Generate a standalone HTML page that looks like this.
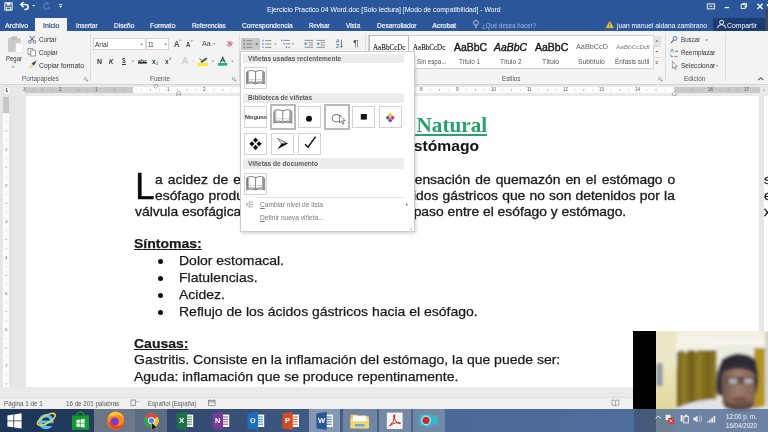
<!DOCTYPE html>
<html lang="es">
<head>
<meta charset="utf-8">
<title>Ejercicio Practico 04 Word.doc - Word</title>
<style>
*{box-sizing:border-box;margin:0;padding:0}
html,body{width:768px;height:432px;overflow:hidden;background:#fff}
body{position:relative;font-family:"Liberation Sans",sans-serif;font-size:7px;color:#333}
.a{position:absolute;white-space:nowrap}
.x{transform-origin:0 50%}
#hdr{left:0;top:0;width:768px;height:31px;background:#2b579a}
#rib{left:0;top:31px;width:768px;height:53.5px;background:#f3f3f3;border-bottom:.7px solid #d4d4d4}
.p{font-size:12.4px;line-height:16px;color:#1a1a1a;transform:scaleX(1.118);transform-origin:0 0;-webkit-text-stroke:.3px #1a1a1a}
.pr{transform-origin:100% 0}
.q{font-size:13.4px;line-height:16px;color:#1a1a1a;transform:scaleX(1.045);transform-origin:0 0;-webkit-text-stroke:.25px #1a1a1a}
.b{left:158px;width:5.4px;height:5.4px;border-radius:50%;background:#111}
#all{position:absolute;left:0;top:0;width:768px;height:432px;filter:blur(.4px)}
</style>
</head>
<body>
<div id="all">
<div id="hdr" class="a"></div>
<div class="a" style="left:35.2px;top:18px;width:31.8px;height:14px;background:#f3f3f3"></div>
<div class="a" style="left:713px;top:17.5px;width:55px;height:13.5px;background:#1b3c70"></div>
<div class="a" style="left:765px;top:9px;width:3px;height:22px;background:#3c4962"></div>
<span class="a x" style="left:266.5px;top:6.26px;font-size:6.9px;line-height:8.97px;color:#fff;transform:scaleX(0.986);">Ejercicio Practico 04 Word.doc [Solo lectura] [Modo de compatibilidad] - Word</span>
<span class="a x" style="left:5px;top:22.26px;font-size:6.9px;line-height:8.97px;color:#fff;transform:scaleX(1.001);-webkit-text-stroke:.15px;">Archivo</span>
<span class="a x" style="left:42.5px;top:22.26px;font-size:6.9px;line-height:8.97px;color:#274980;transform:scaleX(1.025);-webkit-text-stroke:.15px;">Inicio</span>
<span class="a x" style="left:75.5px;top:22.26px;font-size:6.9px;line-height:8.97px;color:#fff;transform:scaleX(0.920);-webkit-text-stroke:.15px;">Insertar</span>
<span class="a x" style="left:113.7px;top:22.26px;font-size:6.9px;line-height:8.97px;color:#fff;transform:scaleX(0.946);-webkit-text-stroke:.15px;">Diseño</span>
<span class="a x" style="left:150px;top:22.26px;font-size:6.9px;line-height:8.97px;color:#fff;transform:scaleX(0.994);-webkit-text-stroke:.15px;">Formato</span>
<span class="a x" style="left:192px;top:22.26px;font-size:6.9px;line-height:8.97px;color:#fff;transform:scaleX(0.918);-webkit-text-stroke:.15px;">Referencias</span>
<span class="a x" style="left:242px;top:22.26px;font-size:6.9px;line-height:8.97px;color:#fff;transform:scaleX(0.967);-webkit-text-stroke:.15px;">Correspondencia</span>
<span class="a x" style="left:309px;top:22.26px;font-size:6.9px;line-height:8.97px;color:#fff;transform:scaleX(0.878);-webkit-text-stroke:.15px;">Revisar</span>
<span class="a x" style="left:345.75px;top:22.26px;font-size:6.9px;line-height:8.97px;color:#fff;transform:scaleX(0.937);-webkit-text-stroke:.15px;">Vista</span>
<span class="a x" style="left:376.5px;top:22.26px;font-size:6.9px;line-height:8.97px;color:#fff;transform:scaleX(0.955);-webkit-text-stroke:.15px;">Desarrollador</span>
<span class="a x" style="left:432.25px;top:22.26px;font-size:6.9px;line-height:8.97px;color:#fff;transform:scaleX(1.000);-webkit-text-stroke:.15px;">Acrobat</span>
<span class="a x" style="left:482px;top:22.26px;font-size:6.9px;line-height:8.97px;color:#a3b8dc;transform:scaleX(0.887);">¿Qué desea hacer?</span>
<span class="a x" style="left:617px;top:22.26px;font-size:6.9px;line-height:8.97px;color:#fff;transform:scaleX(0.971);">juan manuel aldana zambrano</span>
<span class="a x" style="left:727.25px;top:22.26px;font-size:6.9px;line-height:8.97px;color:#fff;transform:scaleX(0.992);">Compartir</span>
<svg class="a" style="left:0;top:0" width="768" height="31" viewBox="0 0 768 31" fill="none" stroke="#fff" stroke-width="1">
<rect x="4.9" y="2.8" width="7.2" height="7.2"/><rect x="6.6" y="2.8" width="3.8" height="2.6" fill="#fff" stroke="none"/><rect x="6.4" y="7.2" width="4.2" height="2.8" stroke-width=".8"/>
<path d="M21.6 4.6 H25.2 a3 2.5 0 0 1 0 5 H24.4" stroke-width="1.5"/><path d="M23.6 2 L20.8 4.6 L23.6 7.2" stroke-width="1.5"/>
<path d="M32.2 5 h3 l-1.5 1.6z" fill="#fff" stroke="none"/>
<path d="M49.6 6.2 a3 3 0 1 1 -1.6 -2.7" stroke="#5f82b8" stroke-width="1.2"/><path d="M47 2 l2 1.6 l-2 1.8" stroke="#5f82b8" stroke-width="1"/>
<path d="M58.9 4.6 h3.4" stroke-width=".9"/><path d="M58.9 5.9 h3.4 l-1.7 1.8z" fill="#fff" stroke="none"/>
<rect x="707.3" y="3.9" width="7.2" height="5" stroke-width=".9"/><path d="M709.4 6.3 h3" stroke-width=".9"/>
<path d="M724.7 7.6 h4.4" stroke-width="1.2"/>
<rect x="741.2" y="4.6" width="4" height="3.8" stroke-width=".9"/><path d="M742.6 4.4 v-1 h4 v3.8 h-1.2" stroke-width=".9"/>
<path d="M757.4 3.8 l5.2 5.2 M762.6 3.8 l-5.2 5.2" stroke-width="1.3"/>
<path d="M766.5 5 l1.5 -1.2 v3z" fill="#fff" stroke="none"/>
<path d="M609.8 21.2 l3.8 6.6 h-7.6z" fill="#f3c744" stroke="#e0b030" stroke-width=".5"/><path d="M609.8 23.4 v2.4 M609.8 26.4 v.7" stroke="#333" stroke-width=".7"/>
<circle cx="475.9" cy="22.8" r="2.4" stroke="#c8d6ee" stroke-width=".8"/><path d="M474.8 26 h2.2 M475 27.4 h1.8" stroke="#c8d6ee" stroke-width=".8"/>
<circle cx="721.6" cy="22.3" r="2" stroke-width="1"/><path d="M717.6 28.2 a4 3.6 0 0 1 8 0" stroke-width="1"/>
</svg>
<div id="rib" class="a"></div>
<div class="a" style="left:90.2px;top:34px;width:1px;height:47px;background:#dedede"></div>
<div class="a" style="left:238.6px;top:34px;width:1px;height:47px;background:#dedede"></div>
<div class="a" style="left:365.4px;top:34px;width:1px;height:47px;background:#dedede"></div>
<div class="a" style="left:665.4px;top:34px;width:1px;height:47px;background:#dedede"></div>
<div class="a" style="left:725px;top:34px;width:1px;height:47px;background:#dedede"></div>
<span class="a x" style="left:6px;top:55.26px;font-size:6.6px;line-height:8.58px;color:#333;transform:scaleX(0.909);">Pegar</span>
<span class="a x" style="left:38.75px;top:36.25px;font-size:6.8px;line-height:8.84px;color:#333;transform:scaleX(0.926);">Cortar</span>
<span class="a x" style="left:38.75px;top:49.25px;font-size:6.8px;line-height:8.84px;color:#333;transform:scaleX(0.936);">Copiar</span>
<span class="a x" style="left:38.75px;top:62.26px;font-size:6.8px;line-height:8.84px;color:#333;transform:scaleX(1.001);">Copiar formato</span>
<span class="a x" style="left:21.9px;top:75.25px;font-size:6.5px;line-height:8.45px;color:#575757;transform:scaleX(0.962);">Portapapeles</span>
<span class="a x" style="left:149.9px;top:75.25px;font-size:6.5px;line-height:8.45px;color:#575757;transform:scaleX(0.988);">Fuente</span>
<span class="a x" style="left:501.5px;top:75.25px;font-size:6.5px;line-height:8.45px;color:#575757;transform:scaleX(0.966);">Estilos</span>
<span class="a x" style="left:684px;top:75.25px;font-size:6.5px;line-height:8.45px;color:#575757;transform:scaleX(1.008);">Edición</span>
<div class="a" style="left:93.4px;top:38.3px;width:52.4px;height:12.2px;background:#fff;border:.6px solid #d6d6d6"></div>
<div class="a" style="left:145.8px;top:38.3px;width:23.7px;height:12.2px;background:#fff;border:.6px solid #d6d6d6"></div>
<span class="a x" style="left:95px;top:41.26px;font-size:6.8px;line-height:8.84px;color:#333;transform:scaleX(0.955);">Arial</span>
<span class="a x" style="left:148px;top:41.26px;font-size:6.8px;line-height:8.84px;color:#333;transform:scaleX(0.793);">11</span>
<span class="a x" style="left:96.5px;top:57.25px;font-size:7.4px;line-height:9.62px;color:#333;font-weight:bold;transform:scaleX(0.936);">N</span>
<span class="a x" style="left:109px;top:57.25px;font-size:7.4px;line-height:9.62px;color:#333;font-weight:bold;font-style:italic;transform:scaleX(0.823);">K</span>
<span class="a x" style="left:121.75px;top:56.26px;font-size:7.2px;line-height:9.36px;color:#333;font-weight:bold;transform:scaleX(0.782);text-decoration:underline;">S</span>
<span class="a x" style="left:138.4px;top:58.25px;font-size:6.6px;line-height:8.58px;color:#333;font-weight:bold;transform:scaleX(0.791);text-decoration:line-through;">abc</span>
<span class="a x" style="left:152px;top:57.26px;font-size:7.4px;line-height:9.62px;color:#333;font-weight:bold;transform:scaleX(0.873);">x</span>
<span class="a x" style="left:156px;top:62.26px;font-size:3.8px;line-height:4.94px;color:#2b79c2;font-weight:bold;transform:scaleX(0.941);">2</span>
<span class="a x" style="left:164.5px;top:57.26px;font-size:7.4px;line-height:9.62px;color:#333;font-weight:bold;transform:scaleX(0.873);">x</span>
<span class="a x" style="left:168.6px;top:57.26px;font-size:3.8px;line-height:4.94px;color:#2b79c2;font-weight:bold;transform:scaleX(0.941);">2</span>
<span class="a x" style="left:173.8px;top:39.26px;font-size:8.6px;line-height:11.18px;color:#444;font-weight:bold;transform:scaleX(0.868);">A</span>
<span class="a x" style="left:186.2px;top:40.26px;font-size:7.2px;line-height:9.36px;color:#444;font-weight:bold;transform:scaleX(0.846);">A</span>
<span class="a x" style="left:201.75px;top:39.26px;font-size:7.6px;line-height:9.88px;color:#444;transform:scaleX(0.941);">Aa</span>
<div class="a" style="left:368.2px;top:35px;width:292.5px;height:33.5px;background:#fff;border:.6px solid #d4d4d4"></div>
<div class="a" style="left:368.6px;top:35.4px;width:40px;height:32.6px;border:1px solid #b8b8b8"></div>
<span class="a x" style="left:372.5px;top:43.26px;font-size:7.8px;line-height:10.14px;color:#222;font-family:'Liberation Serif',serif;transform:scaleX(0.904);-webkit-text-stroke:.15px;">AaBbCcDc</span>
<span class="a x" style="left:412.75px;top:43.26px;font-size:7.8px;line-height:10.14px;color:#222;font-family:'Liberation Serif',serif;transform:scaleX(0.897);-webkit-text-stroke:.15px;">AaBbCcDc</span>
<span class="a x" style="left:453.5px;top:41.25px;font-size:10px;line-height:13px;color:#1a1a1a;transform:scaleX(1.041);-webkit-text-stroke:.4px;">AaBbC</span>
<span class="a x" style="left:494px;top:41.25px;font-size:10px;line-height:13px;color:#1a1a1a;font-style:italic;transform:scaleX(1.041);-webkit-text-stroke:.4px;">AaBbC</span>
<span class="a x" style="left:534.5px;top:41.26px;font-size:10.2px;line-height:13.26px;color:#1a1a1a;transform:scaleX(1.030);-webkit-text-stroke:.4px;">AaBbC</span>
<span class="a x" style="left:576px;top:42.26px;font-size:7.3px;line-height:9.49px;color:#666;transform:scaleX(0.999);">AaBbCcD</span>
<span class="a x" style="left:615.5px;top:43.25px;font-size:6.2px;line-height:8.06px;color:#777;font-style:italic;transform:scaleX(1.036);">AaBbCcDdI</span>
<span class="a x" style="left:416.5px;top:58.26px;font-size:6.5px;line-height:8.45px;color:#555;transform:scaleX(0.960);">Sin espa...</span>
<span class="a x" style="left:459px;top:58.26px;font-size:6.5px;line-height:8.45px;color:#555;transform:scaleX(0.968);">Título 1</span>
<span class="a x" style="left:499.5px;top:58.26px;font-size:6.5px;line-height:8.45px;color:#555;transform:scaleX(0.991);">Título 2</span>
<span class="a x" style="left:542px;top:58.26px;font-size:6.5px;line-height:8.45px;color:#555;transform:scaleX(1.045);">Título</span>
<span class="a x" style="left:578px;top:58.26px;font-size:6.5px;line-height:8.45px;color:#555;transform:scaleX(1.042);">Subtítulo</span>
<span class="a x" style="left:614.75px;top:58.26px;font-size:6.5px;line-height:8.45px;color:#555;transform:scaleX(0.987);">Énfasis sutil</span>
<div class="a" style="left:653px;top:35px;width:7.6px;height:33.5px;background:#f6f6f6;border-left:.6px solid #d4d4d4"></div>
<div class="a" style="left:653.4px;top:35.6px;width:7.2px;height:10.4px;background:#e2e2e2"></div><div class="a" style="left:653px;top:46px;width:7.6px;height:.6px;background:#d4d4d4"></div><div class="a" style="left:653px;top:57px;width:7.6px;height:.6px;background:#d4d4d4"></div>
<span class="a x" style="left:680.5px;top:36.25px;font-size:6.8px;line-height:8.84px;color:#333;transform:scaleX(0.910);">Buscar</span>
<span class="a x" style="left:680.5px;top:49.25px;font-size:6.8px;line-height:8.84px;color:#333;transform:scaleX(0.934);">Reemplazar</span>
<span class="a x" style="left:680.5px;top:62.25px;font-size:6.8px;line-height:8.84px;color:#333;transform:scaleX(0.964);">Seleccionar</span>
<div class="a" style="left:240.7px;top:37.9px;width:19.4px;height:12px;background:#c8c8c8"></div>
<svg class="a" style="left:0;top:31px" width="768" height="54" viewBox="0 31 768 54" fill="none">
<!-- paste -->
<rect x="8" y="38" width="12.5" height="14" rx="1" fill="#c9c9c9"/><rect x="11.4" y="36.2" width="5.6" height="3.2" rx="1" fill="#bdbdbd"/>
<path d="M15.8 43 h5 l2.4 2.4 v7.4 h-7.4z" fill="#fdfdfd" stroke="#d8d8d8" stroke-width=".5"/>
<path d="M11.6 66.6 h3 l-1.5 1.5z" fill="#777"/>
<!-- cut -->
<path d="M29.6 35.8 l4.2 5.2 M34.6 35.8 l-4.2 5.2" stroke="#555" stroke-width="1"/><circle cx="29.8" cy="41.8" r="1.4" stroke="#4a7fc0" stroke-width=".9"/><circle cx="34.4" cy="41.8" r="1.4" stroke="#4a7fc0" stroke-width=".9"/>
<!-- copy -->
<rect x="28" y="48.4" width="4.6" height="5.8" fill="#fafafa" stroke="#777" stroke-width=".7"/><rect x="30.8" y="50.2" width="4.8" height="5.8" fill="#fafafa" stroke="#777" stroke-width=".7"/>
<!-- painter -->
<path d="M28.4 67.6 l3.4 -3.6 l2 1.6 l-2.2 2.6z" fill="#f0d9a8"/><path d="M31.6 63.8 l2.6 -2.4 l1.8 1.4 l-2.2 2.8z" fill="#444"/><path d="M35 61.6 l1.2 -1" stroke="#444" stroke-width="1"/>
<!-- launchers -->
<g stroke="#777" stroke-width=".6"><path d="M84.4 77.8 h2.4 M84.4 77.8 v2.4 M85.6 79 l2 2 M87.6 79.4 v1.6 h-1.6"/><path d="M232.6 77.8 h2.4 M232.6 77.8 v2.4 M233.8 79 l2 2 M235.8 79.4 v1.6 h-1.6"/><path d="M658.8 77.8 h2.4 M658.8 77.8 v2.4 M660 79 l2 2 M662 79.4 v1.6 h-1.6"/></g>
<!-- dropdown arrows -->
<g fill="#666"><path d="M140.2 43.8 h2.8 l-1.4 1.5z"/><path d="M164.4 43.8 h2.8 l-1.4 1.5z"/><path d="M131.6 60.8 h2.4 l-1.2 1.3z"/><path d="M212.8 43.4 h2.4 l-1.2 1.3z"/><path d="M211.6 60.8 h2.4 l-1.2 1.3z"/><path d="M231.2 60.8 h2.4 l-1.2 1.3z"/><path d="M255.4 43.4 h2.8 l-1.4 1.5z" fill="#444"/><path d="M274.2 43.4 h2.4 l-1.2 1.3z"/><path d="M291.8 43.4 h2.4 l-1.2 1.3z"/><path d="M705.4 39.6 h2.4 l-1.2 1.3z"/><path d="M715.8 65.4 h2.4 l-1.2 1.3z"/></g>
<path d="M191.8 60.8 h2.4 l-1.2 1.3z" fill="#b5c4dc"/>
<!-- grow/shrink marks -->
<path d="M179 40.6 l1.3 -1.2 l1.3 1.2z" fill="#555"/><path d="M190.6 40.4 l1.2 1.2 l1.2 -1.2z" fill="#555"/>
<!-- clear formatting -->
<path d="M226.4 45.8 l3.4 -5.4 l3.6 2 l-3.6 5z" fill="#eaa4b8"/><path d="M227.6 41.4 l4.6 4.2" stroke="#8d4f9a" stroke-width="1"/>
<!-- text effects A -->
<path d="M182 64.6 l3 -7.4 l3 7.4 M183.2 62 h3.6" stroke="#c9c9c9" stroke-width="1.1"/>
<!-- highlight -->
<rect x="197.4" y="63" width="10.6" height="3.2" fill="#f5f02a"/><path d="M200.2 61.8 l5.8 -4.4 l1.6 1.4 l-5.6 4.2z" fill="#555"/><path d="M199.4 58.4 l3 2.4" stroke="#7c5aa8" stroke-width="1"/>
<!-- font colour -->
<path d="M220.3 62.4 l2.5 -5 l2.5 5 M221.2 60.7 h3.2" stroke="#4a5a52" stroke-width="1.2"/><rect x="218" y="63" width="9.2" height="2.7" fill="#1fb574"/>
<!-- bullets icon -->
<g fill="#8a8a8a"><rect x="243.2" y="39.8" width="1.6" height="1.6"/><rect x="243.2" y="43.2" width="1.6" height="1.6"/><rect x="243.2" y="46.6" width="1.6" height="1.6"/></g><path d="M246.2 40.6 h6 M246.2 44 h6 M246.2 47.4 h6" stroke="#777" stroke-width=".8"/>
<!-- numbering icon -->
<g fill="#3f74b9"><rect x="262.4" y="39.6" width="1" height="1.8"/><rect x="262.4" y="43" width="1" height="1.8"/><rect x="262.4" y="46.4" width="1" height="1.8"/></g><path d="M265 40.6 h6.4 M265 44 h6.4 M265 47.4 h6.4" stroke="#777" stroke-width=".8"/>
<!-- multilevel -->
<g fill="#3f74b9"><rect x="281.2" y="39.6" width="1" height="1.6"/><rect x="283.6" y="43" width="1" height="1.6"/><rect x="286" y="46.4" width="1" height="1.6"/></g><path d="M283.4 40.4 h6.6 M285.8 43.8 h4.4 M288.2 47.2 h2.2" stroke="#777" stroke-width=".8"/>
<!-- indents -->
<path d="M304.6 40.4 h8.6 M308.8 42.7 h4.4 M308.8 45 h4.4 M304.6 47.3 h8.6" stroke="#777" stroke-width=".8"/><path d="M307.6 43.8 h-2.8 m1.2 -1.3 l-1.4 1.3 l1.4 1.3" stroke="#3f74b9" stroke-width=".8"/>
<path d="M316.4 40.4 h8.6 M320.6 42.7 h4.4 M320.6 45 h4.4 M316.4 47.3 h8.6" stroke="#777" stroke-width=".8"/><path d="M316.4 43.8 h2.8 m-1.2 -1.3 l1.4 1.3 l-1.4 1.3" stroke="#3f74b9" stroke-width=".8"/>
<!-- sort arrow -->
<path d="M341.4 39.8 v7.4 m-1.4 -1.4 l1.4 1.5 l1.4 -1.5" stroke="#555" stroke-width=".8"/>
<!-- gallery arrows -->
<g fill="#666"><path d="M655.4 41.6 h2.8 l-1.4 -1.5z"/><path d="M655.4 51 h2.8 l-1.4 1.5z"/><path d="M655.4 62.8 h2.8 l-1.4 1.4z"/></g><path d="M655.4 61.4 h2.8" stroke="#666" stroke-width=".6"/>
<!-- search -->
<circle cx="675" cy="38.4" r="2" stroke="#3f74b9" stroke-width=".9"/><path d="M673.6 40 l-2.6 2.8" stroke="#555" stroke-width="1.1"/>
<!-- replace -->
<path d="M670.4 52.6 l1.6 -3.6 l1.6 3.6 M675 51.2 h2.8 m-1 -1 l1 1 l-1 1" stroke="#3f74b9" stroke-width=".7"/><path d="M674.2 56.6 h3.4 M671 54.6 v2 h2" stroke="#666" stroke-width=".7"/>
<!-- select cursor -->
<path d="M672.4 61.4 v7 l1.7 -1.6 l1.2 2.6 l.9 -.4 l-1.2 -2.5 h2.2z" fill="#fff" stroke="#666" stroke-width=".6"/>
<!-- collapse -->
<path d="M758.2 80.2 l2.6 -2.5 l2.6 2.5" stroke="#555" stroke-width="1.1"/>
</svg>
<span class="a x" style="left:335.6px;top:39.25px;font-size:4.6px;line-height:5.98px;color:#3f74b9;font-weight:bold;transform:scaleX(1.022);">A</span>
<span class="a x" style="left:335.6px;top:44.26px;font-size:4.6px;line-height:5.98px;color:#3f74b9;font-weight:bold;transform:scaleX(1.209);">Z</span>
<span class="a x" style="left:353.2px;top:38.27px;font-size:8.4px;line-height:10.92px;color:#555;transform:scaleX(1.267);">¶</span>
<div class="a" style="left:0;top:84.5px;width:768px;height:11.5px;background:#e9e9e9"></div>
<div class="a" style="left:2.5px;top:86px;width:8.5px;height:8.5px;background:#f6f6f6;border:.6px solid #dcdcdc"></div>
<div class="a" style="left:5.6px;top:88.4px;width:2.8px;height:3.6px;border-left:1px solid #666;border-bottom:1px solid #666"></div>
<div class="a" style="left:25px;top:87px;width:735px;height:5.8px;background:#c9c9c9"></div>
<div class="a" style="left:132.5px;top:87px;width:541.8px;height:5.8px;background:#fdfdfd"></div>
<span class="a x" style="left:22.9px;top:87.25px;font-size:4.6px;line-height:5.98px;color:#555;transform:scaleX(1.015);">3</span>
<span class="a x" style="left:59px;top:87.25px;font-size:4.6px;line-height:5.98px;color:#555;transform:scaleX(1.015);">2</span>
<span class="a x" style="left:95.1px;top:87.25px;font-size:4.6px;line-height:5.98px;color:#555;transform:scaleX(1.015);">1</span>
<span class="a x" style="left:167.3px;top:87.25px;font-size:4.6px;line-height:5.98px;color:#555;transform:scaleX(1.015);">1</span>
<span class="a x" style="left:203.4px;top:87.25px;font-size:4.6px;line-height:5.98px;color:#555;transform:scaleX(1.015);">2</span>
<span class="a x" style="left:239.5px;top:87.25px;font-size:4.6px;line-height:5.98px;color:#555;transform:scaleX(1.015);">3</span>
<span class="a x" style="left:275.6px;top:87.25px;font-size:4.6px;line-height:5.98px;color:#555;transform:scaleX(1.015);">4</span>
<span class="a x" style="left:311.7px;top:87.25px;font-size:4.6px;line-height:5.98px;color:#555;transform:scaleX(1.015);">5</span>
<span class="a x" style="left:347.8px;top:87.25px;font-size:4.6px;line-height:5.98px;color:#555;transform:scaleX(1.015);">6</span>
<span class="a x" style="left:383.9px;top:87.25px;font-size:4.6px;line-height:5.98px;color:#555;transform:scaleX(1.015);">7</span>
<span class="a x" style="left:420px;top:87.25px;font-size:4.6px;line-height:5.98px;color:#555;transform:scaleX(1.015);">8</span>
<span class="a x" style="left:456.1px;top:87.25px;font-size:4.6px;line-height:5.98px;color:#555;transform:scaleX(1.015);">9</span>
<span class="a x" style="left:491px;top:87.25px;font-size:4.6px;line-height:5.98px;color:#555;transform:scaleX(0.976);">10</span>
<span class="a x" style="left:527.1px;top:87.25px;font-size:4.6px;line-height:5.98px;color:#555;transform:scaleX(1.046);">11</span>
<span class="a x" style="left:563.2px;top:87.25px;font-size:4.6px;line-height:5.98px;color:#555;transform:scaleX(0.976);">12</span>
<span class="a x" style="left:599.3px;top:87.25px;font-size:4.6px;line-height:5.98px;color:#555;transform:scaleX(0.976);">13</span>
<span class="a x" style="left:635.4px;top:87.25px;font-size:4.6px;line-height:5.98px;color:#555;transform:scaleX(0.976);">14</span>
<span class="a x" style="left:707.6px;top:87.25px;font-size:4.6px;line-height:5.98px;color:#555;transform:scaleX(0.976);">16</span>
<span class="a x" style="left:743.7px;top:87.25px;font-size:4.6px;line-height:5.98px;color:#555;transform:scaleX(0.976);">17</span>
<svg class="a" style="left:0;top:84px" width="768" height="14" viewBox="0 84 768 14" stroke="#8a8a8a" stroke-width=".6" fill="none"><path d="M33.2 89.5 v.9"/><path d="M42.2 88.8 v2.2"/><path d="M51.3 89.5 v.9"/><path d="M69.3 89.5 v.9"/><path d="M78.3 88.8 v2.2"/><path d="M87.4 89.5 v.9"/><path d="M105.4 89.5 v.9"/><path d="M114.5 88.8 v2.2"/><path d="M123.5 89.5 v.9"/><path d="M141.5 89.5 v.9"/><path d="M150.6 88.8 v2.2"/><path d="M159.6 89.5 v.9"/><path d="M177.6 89.5 v.9"/><path d="M186.7 88.8 v2.2"/><path d="M195.7 89.5 v.9"/><path d="M213.7 89.5 v.9"/><path d="M222.8 88.8 v2.2"/><path d="M231.8 89.5 v.9"/><path d="M249.8 89.5 v.9"/><path d="M258.9 88.8 v2.2"/><path d="M267.9 89.5 v.9"/><path d="M285.9 89.5 v.9"/><path d="M295.0 88.8 v2.2"/><path d="M304.0 89.5 v.9"/><path d="M322.0 89.5 v.9"/><path d="M331.1 88.8 v2.2"/><path d="M340.1 89.5 v.9"/><path d="M358.1 89.5 v.9"/><path d="M367.1 88.8 v2.2"/><path d="M376.2 89.5 v.9"/><path d="M394.2 89.5 v.9"/><path d="M403.2 88.8 v2.2"/><path d="M412.3 89.5 v.9"/><path d="M430.3 89.5 v.9"/><path d="M439.4 88.8 v2.2"/><path d="M448.4 89.5 v.9"/><path d="M466.4 89.5 v.9"/><path d="M475.4 88.8 v2.2"/><path d="M484.5 89.5 v.9"/><path d="M502.5 89.5 v.9"/><path d="M511.6 88.8 v2.2"/><path d="M520.6 89.5 v.9"/><path d="M538.6 89.5 v.9"/><path d="M547.7 88.8 v2.2"/><path d="M556.7 89.5 v.9"/><path d="M574.7 89.5 v.9"/><path d="M583.8 88.8 v2.2"/><path d="M592.8 89.5 v.9"/><path d="M610.8 89.5 v.9"/><path d="M619.9 88.8 v2.2"/><path d="M628.9 89.5 v.9"/><path d="M646.9 89.5 v.9"/><path d="M656.0 88.8 v2.2"/><path d="M665.0 89.5 v.9"/><path d="M683.0 89.5 v.9"/><path d="M692.1 88.8 v2.2"/><path d="M701.1 89.5 v.9"/><path d="M719.1 89.5 v.9"/><path d="M728.1 88.8 v2.2"/><path d="M737.2 89.5 v.9"/><path d="M755.2 89.5 v.9"/><path d="M764.2 88.8 v2.2"/><path d="M773.3 89.5 v.9"/><path d="M154 85 h3.6 v1.6 l-1.8 1.8 l-1.8 -1.8z" fill="#f4f4f4" stroke="#777"/><path d="M176.9 96.4 h3.6 v-3.6 l-1.8 -1.8 l-1.8 1.8z M176.9 94.4 h3.6" fill="#f4f4f4" stroke="#777"/><path d="M672.4 95.2 h3.8 v-1.6 l-1.9 -1.8 l-1.9 1.8z" fill="#f4f4f4" stroke="#777"/></svg>
<div class="a" style="left:0;top:96px;width:768px;height:292px;background:#e6e6e6"></div>
<div class="a" style="left:25.5px;top:96.4px;width:733.8px;height:292px;background:#fff"></div>
<div class="a" style="left:763.5px;top:96.4px;width:5px;height:292px;background:#fff"></div>
<div class="a" style="left:3px;top:97px;width:6.2px;height:291px;background:#fbfbfb"></div>
<div class="a" style="left:3px;top:97px;width:6.2px;height:15.6px;background:#c6c6c6"></div>
<span class="a x" style="left:4.9px;top:147.26px;font-size:4.4px;line-height:5.72px;color:#666;transform:scaleX(1.060);">1</span>
<span class="a x" style="left:4.9px;top:183.25px;font-size:4.4px;line-height:5.72px;color:#666;transform:scaleX(1.060);">2</span>
<span class="a x" style="left:4.9px;top:219.25px;font-size:4.4px;line-height:5.72px;color:#666;transform:scaleX(1.060);">3</span>
<span class="a x" style="left:4.9px;top:255.26px;font-size:4.4px;line-height:5.72px;color:#666;transform:scaleX(1.060);">4</span>
<span class="a x" style="left:4.9px;top:291.26px;font-size:4.4px;line-height:5.72px;color:#666;transform:scaleX(1.060);">5</span>
<span class="a x" style="left:4.9px;top:327.25px;font-size:4.4px;line-height:5.72px;color:#666;transform:scaleX(1.060);">6</span>
<span class="a x" style="left:4.9px;top:363.26px;font-size:4.4px;line-height:5.72px;color:#666;transform:scaleX(1.060);">7</span>
<svg class="a" style="left:0;top:96px" width="12" height="292" viewBox="0 96 12 292" stroke="#8a8a8a" stroke-width=".6"><path d="M5.8 122.0 h.8"/><path d="M5.2 131.1 h2"/><path d="M5.8 140.1 h.8"/><path d="M5.8 158.2 h.8"/><path d="M5.2 167.2 h2"/><path d="M5.8 176.2 h.8"/><path d="M5.8 194.3 h.8"/><path d="M5.2 203.3 h2"/><path d="M5.8 212.3 h.8"/><path d="M5.8 230.4 h.8"/><path d="M5.2 239.4 h2"/><path d="M5.8 248.4 h.8"/><path d="M5.8 266.5 h.8"/><path d="M5.2 275.5 h2"/><path d="M5.8 284.6 h.8"/><path d="M5.8 302.6 h.8"/><path d="M5.2 311.7 h2"/><path d="M5.8 320.7 h.8"/><path d="M5.8 338.8 h.8"/><path d="M5.2 347.8 h2"/><path d="M5.8 356.8 h.8"/><path d="M5.8 374.9 h.8"/><path d="M5.2 383.9 h2"/><path d="M5.8 392.9 h.8"/></svg>
<div class="a" style="left:763.5px;top:96px;width:5px;height:292px;overflow:hidden"><span class="a p" style="left:.6px;top:171.95px;position:absolute;margin-top:-96px">s</span><span class="a p" style="left:.6px;top:187.9px;margin-top:-96px">e</span><span class="a p" style="left:.6px;top:203.9px;margin-top:-96px">x</span></div>
<div class="a" style="right:281px;top:112.8px;font:bold 21px/24px 'Liberation Serif',serif;color:#2aa06c;transform:scaleX(1.01);transform-origin:100% 0">Medicina Natural</div>
<div class="a" style="left:330px;top:133.7px;width:157px;height:.8px;background:#2aa06c"></div>
<div class="a" style="left:330px;top:135.4px;width:157px;height:.8px;background:#2aa06c"></div>
<div class="a" style="right:289.4px;top:136.6px;font:bold 15px/17px 'Liberation Sans',sans-serif;color:#111;transform:scaleX(1.045);transform-origin:100% 0">Acidez de estómago</div>
<div class="a" style="left:135.3px;top:166.4px;font:37.2px/40px 'Liberation Sans',sans-serif;color:#0a0a0a;-webkit-text-stroke:.45px #0a0a0a;transform:scaleX(.93);transform-origin:2.8px 0">L</div>
<div class="a p" style="left:155.2px;top:171.95px;word-spacing:1.08px">a acidez de estómago es una</div>
<div class="a p pr" style="right:93.1px;top:171.95px;word-spacing:1.08px">sensación de quemazón en el estómago o</div>
<div class="a p" style="left:154.7px;top:187.9px;word-spacing:.3px">esófago producida por el reflujo</div>
<div class="a p pr" style="right:93.6px;top:187.9px;word-spacing:.3px">de ácidos gástricos que no son detenidos por la</div>
<div class="a p" style="left:134.7px;top:203.9px">válvula esofágica que controla</div>
<div class="a p pr" style="right:141.5px;top:203.9px">el paso entre el esófago y estómago.</div>
<div class="a q" style="left:134.2px;top:236.2px;font-weight:bold;text-decoration:underline">Síntomas:</div>
<div class="a b" style="top:259px"></div><div class="a q" style="left:178.8px;top:253px">Dolor estomacal.</div>
<div class="a b" style="top:276px"></div><div class="a q" style="left:178.8px;top:270.1px">Flatulencias.</div>
<div class="a b" style="top:292.6px"></div><div class="a q" style="left:178.8px;top:287px">Acidez.</div>
<div class="a b" style="top:309.7px"></div><div class="a q" style="left:178.8px;top:303.9px">Reflujo de los ácidos gástricos hacia el esófago.</div>
<div class="a q" style="left:134.3px;top:336px;font-weight:bold;text-decoration:underline">Causas:</div>
<div class="a q" style="left:134.3px;top:352px">Gastritis. Consiste en la inflamación del estómago, la que puede ser:</div>
<div class="a q" style="left:134.3px;top:368.7px">Aguda: inflamación que se produce repentinamente.</div>
<div class="a" style="left:0;top:387.4px;width:768px;height:10px;background:#eaeaea"></div>
<div class="a" style="left:0;top:396.6px;width:768px;height:12.6px;background:#f0f0f0;border-top:.6px solid #dedede"></div>
<span class="a x" style="left:3.7px;top:400.25px;font-size:6.3px;line-height:8.19px;color:#585858;transform:scaleX(0.998);">Página 1 de 1</span>
<span class="a x" style="left:65.8px;top:400.25px;font-size:6.3px;line-height:8.19px;color:#585858;transform:scaleX(0.987);">16 de 201 palabras</span>
<span class="a x" style="left:148.3px;top:400.25px;font-size:6.3px;line-height:8.19px;color:#585858;transform:scaleX(0.967);">Español (España)</span>
<svg class="a" style="left:0;top:397px" width="768" height="12" viewBox="0 397 768 12" fill="none" stroke="#777" stroke-width=".7">
<rect x="131" y="400" width="4.6" height="5.6"/><path d="M136.4 401.4 l1 1 l1.4 -1.8" stroke-width=".6"/>
<rect x="208.4" y="400.6" width="6.6" height="5" /><path d="M208.4 402 h6.6" /><path d="M210 400.4 v-1 M213.4 400.4 v-1"/>
<path d="M612 400.2 q1.8 -.6 3.4 .6 q1.6 -1.2 3.4 -.6 v5 q-1.8 -.6 -3.4 .6 q-1.6 -1.2 -3.4 -.6z M615.4 400.8 v5" stroke="#888"/>
</svg>
<div class="a" style="left:633.2px;top:331px;width:134.8px;height:101px;background:#000"></div>
<svg class="a" style="left:655.6px;top:331px" width="112.4" height="101" viewBox="0 0 112.4 101">
<defs><filter id="bl" x="-10%" y="-10%" width="120%" height="120%"><feGaussianBlur stdDeviation="1.5"/></filter>
<linearGradient id="cu" x1="0" x2="1"><stop offset="0" stop-color="#6d5b16"/><stop offset=".18" stop-color="#93802a"/><stop offset=".36" stop-color="#6f5d18"/><stop offset=".55" stop-color="#958128"/><stop offset=".75" stop-color="#75621a"/><stop offset="1" stop-color="#8d7924"/></linearGradient>
<linearGradient id="wl" x1="0" x2="0" y1="0" y2="1"><stop offset="0" stop-color="#f1ecd2"/><stop offset=".5" stop-color="#e8e0b0"/><stop offset="1" stop-color="#d9cf8e"/></linearGradient>
<linearGradient id="fc" x1="0" x2="1"><stop offset="0" stop-color="#6e5449"/><stop offset=".45" stop-color="#a07c69"/><stop offset="1" stop-color="#826457"/></linearGradient></defs>
<rect width="112.4" height="101" fill="url(#wl)"/>
<g filter="url(#bl)">
<rect x="19" y="-4" width="100" height="19" fill="#f3f1e6"/><rect x="-4" y="-4" width="25" height="40" fill="#ebe6c6"/>
<rect x="21" y="8" width="95" height="14" fill="#f6f5ee"/>
<rect x="58" y="14" width="48" height="70" fill="#ecebe0"/>
<rect x="21" y="19" width="39.6" height="64" fill="url(#cu)"/>
<rect x="98" y="17" width="11" height="64" fill="#b3931f"/>
<rect x="108.8" y="0" width="6" height="101" fill="#d4d3c8"/>
<path d="M20 23 q5 -7 10 -1 q5 -7 10 -1 q5 -7 10 -1 q5 -7 11 0 v-9 h-41z" fill="#f4f2e6"/>
<rect x=".5" y="32" width="6" height="23" fill="#8f9aa6"/>
<path d="M60.6 62 q-2 -26 8 -35 q12 -8 26 -2 q9 6 7.5 30 l-3 10 h-36z" fill="#33303a"/>
<path d="M66 44 q2 -6 16 -6 q14 0 17 6 v28 q-4 10 -16 12 q-12 -2 -17 -12z" fill="url(#fc)"/>
<path d="M64 40 q8 -8 18 -6 q12 -1 19 7 l-1 -12 q-16 -10 -34 -1z" fill="#2f2c35"/>
<rect x="69" y="46" width="30" height="7" rx="2" fill="#624e47"/>
<ellipse cx="77" cy="50" rx="4.6" ry="2.6" fill="#b4b2b8"/><ellipse cx="92.4" cy="50" rx="4.6" ry="2.6" fill="#b4b2b8"/>
<ellipse cx="84" cy="69" rx="8" ry="4" fill="#75584c"/>
<path d="M18 101 v-22 q14 -9 42 -11 l8 8 q12 8 30 2 l14 -4 v27z" fill="#e3e3e9"/>
<path d="M68 76 q14 8 30 0 l-2 -6 q-12 6 -26 0z" fill="#5f4a42"/>
</g>
</svg>
<div class="a" style="left:0;top:409px;width:634px;height:23px;background:linear-gradient(90deg,#1d3556 0%,#213a5e 12%,#2c4468 22%,#3a5278 40%,#43608c 55%,#4a6996 70%,#4e6d9c 100%)"></div>
<div class="a" style="left:633.5px;top:409px;width:134.5px;height:23px;background:rgba(84,110,148,.82)"></div>
<div class="a" style="left:94px;top:409px;width:40.5px;height:23px;background:rgba(175,175,170,.5)"></div>
<div class="a" style="left:135px;top:409px;width:31.7px;height:23px;background:rgba(160,162,165,.42)"></div>
<div class="a" style="left:309px;top:409px;width:30.5px;height:23px;background:rgba(190,200,215,.55)"></div>
<div class="a" style="left:343px;top:409px;width:34px;height:23px;background:rgba(175,180,185,.42)"></div>
<div class="a" style="left:379px;top:409px;width:32px;height:23px;background:rgba(175,180,185,.45)"></div>
<div class="a" style="left:412.7px;top:409px;width:32.3px;height:23px;background:rgba(175,180,185,.42)"></div>
<svg class="a" style="left:0;top:409px" width="768" height="23" viewBox="0 409 768 23" fill="none">
<path d="M7.4 415.4 l6 -.9 v6 h-6z M14.2 414.4 l7.4 -1.1 v7.2 h-7.4z M7.4 421.3 h6 v6 l-6 -.9z M14.2 421.3 h7.4 v7.2 l-7.4 -1.1z" fill="#fff"/>
<circle cx="46" cy="421.6" r="5.8" stroke="#4fc3f3" stroke-width="3.6"/><path d="M41 421.8 h11" stroke="#4fc3f3" stroke-width="2.6"/><rect x="47" y="423.2" width="8" height="2.8" fill="#203859"/><ellipse cx="46.4" cy="419.4" rx="10" ry="3.8" transform="rotate(-30 46.4 419.4)" stroke="#f0cf4a" stroke-width="1.6"/>
<path d="M72 415.4 h17 v14.4 h-17z" fill="#159a2e"/><path d="M77 415.4 a3.5 3.4 0 0 1 7 0" stroke="#159a2e" stroke-width="1.4"/><path d="M76.4 420 l3.4 -.5 v3.3 h-3.4z M80.6 419.4 l4 -.6 v4 h-4z M76.4 423.6 h3.4 v3.3 l-3.4 -.5z M80.6 423.6 h4 v4 l-4 -.6z" fill="#fff"/>
<circle cx="115.6" cy="421" r="8.6" fill="#ff8a1c"/><path d="M108 417 q2 -5 8 -5.4 q6 .6 8 6.4 q-4 -4 -9 -2.6z" fill="#ffc430"/><circle cx="114.6" cy="421.6" r="4.2" fill="#7a3bd0"/><path d="M107.4 420 q2 9 9 9.4 q7 -1 8 -8 q-3 6 -9 4 q-5 -1 -8 -5.4z" fill="#f0431c"/>
<circle cx="151.4" cy="420.6" r="7" fill="#e6e6e6"/><path d="M151.4 420.6 L145 416.9 A7.4 7.4 0 0 1 157.8 416.9z" fill="#e04436"/><path d="M151.4 420.6 L157.8 416.9 A7.4 7.4 0 0 1 151.4 428z" fill="#f3c12c"/><path d="M151.4 420.6 L151.4 428 A7.4 7.4 0 0 1 145 416.9z" fill="#2fa24f"/><circle cx="151.4" cy="420.6" r="3.2" fill="#4a86e8" stroke="#fff" stroke-width=".9"/>
<path d="M151.6 422.4 v8 l1.9 -1.8 l1.4 3 l1.3 -.6 l-1.4 -2.9 h2.6z" fill="#111" stroke="#ddd" stroke-width=".4"/>
<rect x="184.2" y="414.6" width="9" height="12.4" fill="#fff"/><path d="M187 417 h5 M187 419.4 h5 M187 421.8 h5 M187 424.2 h5" stroke="#1e7145" stroke-width=".9"/><path d="M176.6 413.4 l10.4 -1.6 v18.2 l-10.4 -1.6z" fill="#1e7145"/><rect x="220.2" y="414.6" width="9" height="12.4" fill="#fff"/><path d="M223 417 h5 M223 419.4 h5 M223 421.8 h5 M223 424.2 h5" stroke="#7a3a96" stroke-width=".9"/><path d="M212.6 413.4 l10.4 -1.6 v18.2 l-10.4 -1.6z" fill="#7a3a96"/><rect x="255.2" y="414.6" width="9" height="12.4" fill="#fff"/><path d="M258 417 h5 M258 419.4 h5 M258 421.8 h5 M258 424.2 h5" stroke="#1c6fc0" stroke-width=".9"/><path d="M247.6 413.4 l10.4 -1.6 v18.2 l-10.4 -1.6z" fill="#1c6fc0"/><rect x="290" y="414.6" width="9" height="12.4" fill="#fff"/><path d="M292.8 417 h5 M292.8 419.4 h5 M292.8 421.8 h5 M292.8 424.2 h5" stroke="#d24a26" stroke-width=".9"/><path d="M282.4 413.4 l10.4 -1.6 v18.2 l-10.4 -1.6z" fill="#d24a26"/><rect x="324" y="414.6" width="9" height="12.4" fill="#fff"/><path d="M326.8 417 h5 M326.8 419.4 h5 M326.8 421.8 h5 M326.8 424.2 h5" stroke="#2b579a" stroke-width=".9"/><path d="M316.4 413.4 l10.4 -1.6 v18.2 l-10.4 -1.6z" fill="#2b579a"/>
<path d="M350.6 414.4 h6 l1.4 1.6 h10.8 v12.2 h-18.2z" fill="#e8c65a"/><rect x="350.6" y="417.6" width="18.2" height="10.6" fill="#f4dc86"/><rect x="353" y="415.6" width="13.4" height="6" fill="#fbfbf4"/><path d="M350.6 421.4 h18.2 v6.8 h-18.2z" fill="#f1d571"/><rect x="355" y="424" width="9.4" height="2.4" fill="#6aa7d8"/>
<rect x="386.8" y="412.6" width="15.8" height="16.4" fill="#f5f5f5"/><path d="M389.6 426 q4.4 -4 5.2 -10 q.4 -1.6 -1 -1 q-1 2.6 3.4 7.6 q2.4 1.8 3.4 .6 q-1 -1.4 -5 -.4 q-4.2 1.2 -6 3.2z" stroke="#d0201c" stroke-width="1"/>
<path d="M419.4 414.6 h13 v3 l5.4 -2.6 v11 l-5.4 -2.6 v3 h-13z" fill="#35b8cc"/><circle cx="426" cy="420.4" r="3.4" fill="#d8232a"/><circle cx="426" cy="420.4" r="4.4" stroke="#e9f6f8" stroke-width=".9"/>
<path d="M655.6 418.4 l2.6 -2.4 l2.6 2.4" stroke="#e4e8ee" stroke-width="1"/>
<rect x="665.6" y="414.8" width="5" height="5.2" fill="#e9ecf0"/><rect x="668.2" y="418" width="5.6" height="5.6" fill="#d92a2a"/><path d="M669.4 419.2 l3.2 3.2 M672.6 419.2 l-3.2 3.2" stroke="#fff" stroke-width=".8"/>
<rect x="680.6" y="415" width="2" height="6.6" fill="#e9ecf0"/><rect x="683.8" y="416.6" width="4.6" height="6.2" fill="none" stroke="#e9ecf0" stroke-width="1"/><rect x="684.8" y="414.6" width="2.4" height="1.6" fill="#e9ecf0"/>
<path d="M693.4 417.6 h1.8 l2.4 -2.2 v7.2 l-2.4 -2.2 h-1.8z" fill="#e9ecf0"/><path d="M699 416.4 q1.6 2.4 0 5 M700.6 415.2 q2.4 3.6 0 7.4" stroke="#d3d9e2" stroke-width=".7"/>
<path d="M707 422.6 h1.6 v-1.4 h-1.6z M709.2 422.6 h1.6 v-3 h-1.6z M711.4 422.6 h1.6 v-4.8 h-1.6z M713.6 422.6 h1.6 v-6.6 h-1.6z" fill="#e9ecf0"/>
</svg>
<span class="a x" style="left:179px;top:417.26px;font-size:6.6px;line-height:8.58px;color:#fff;font-weight:bold;transform:scaleX(1.226);">X</span>
<span class="a x" style="left:215px;top:417.26px;font-size:6.6px;line-height:8.58px;color:#fff;font-weight:bold;transform:scaleX(1.133);">N</span>
<span class="a x" style="left:250px;top:417.26px;font-size:6.6px;line-height:8.58px;color:#fff;font-weight:bold;transform:scaleX(1.089);">O</span>
<span class="a x" style="left:285px;top:417.26px;font-size:6.6px;line-height:8.58px;color:#fff;font-weight:bold;transform:scaleX(1.180);">P</span>
<span class="a x" style="left:318.2px;top:417.26px;font-size:6.6px;line-height:8.58px;color:#fff;font-weight:bold;transform:scaleX(1.155);">W</span>
<span class="a x" style="left:726px;top:413.26px;font-size:6.3px;line-height:8.19px;color:#f4f6fa;transform:scaleX(0.984);">12:00 p. m.</span>
<span class="a x" style="left:726px;top:422.26px;font-size:6.3px;line-height:8.19px;color:#f4f6fa;transform:scaleX(0.984);">16/04/2020</span>
<div class="a" style="left:240.3px;top:51.4px;width:174.6px;height:181px;background:#fff;border:.8px solid #cbcbcb;box-shadow:1px 1.5px 3px rgba(0,0,0,.17)"></div>
<div class="a" style="left:242.5px;top:53.5px;width:161.5px;height:9.8px;background:#ededed"></div>
<div class="a" style="left:242.5px;top:92.75px;width:161.5px;height:9.85px;background:#ededed"></div>
<div class="a" style="left:242.5px;top:158px;width:161.5px;height:10.6px;background:#ededed"></div>
<span class="a x" style="left:247.5px;top:54.25px;font-size:7.3px;line-height:9.49px;color:#5a5a5a;font-weight:bold;transform:scaleX(0.892);">Viñetas usadas recientemente</span>
<span class="a x" style="left:247.5px;top:93.26px;font-size:7.3px;line-height:9.49px;color:#5a5a5a;font-weight:bold;transform:scaleX(0.882);">Biblioteca de viñetas</span>
<span class="a x" style="left:247.5px;top:159.27px;font-size:7.3px;line-height:9.49px;color:#5a5a5a;font-weight:bold;transform:scaleX(0.901);">Viñetas de documento</span>
<div class="a" style="left:244.2px;top:66.5px;width:22.5px;height:22.4px;background:#fff;border:.7px solid #d2d2d2"></div>
<div class="a" style="left:244.2px;top:105.5px;width:22.5px;height:22.4px;background:#fff;border:.7px solid #d2d2d2"></div>
<div class="a" style="left:269.5px;top:103.9px;width:26px;height:26px;background:#fff;border:2px solid #b9b9b9"></div>
<div class="a" style="left:298.3px;top:105.5px;width:22.5px;height:22.4px;background:#fff;border:.7px solid #d2d2d2"></div>
<div class="a" style="left:323.6px;top:103.9px;width:26px;height:26px;background:#fff;border:2px solid #b9b9b9"></div>
<div class="a" style="left:352px;top:105.5px;width:22.5px;height:22.4px;background:#fff;border:.7px solid #d2d2d2"></div>
<div class="a" style="left:379px;top:105.5px;width:22.5px;height:22.4px;background:#fff;border:.7px solid #d2d2d2"></div>
<div class="a" style="left:244.2px;top:132.6px;width:22.5px;height:22.4px;background:#fff;border:.7px solid #d2d2d2"></div>
<div class="a" style="left:271.3px;top:132.6px;width:22.5px;height:22.4px;background:#fff;border:.7px solid #d2d2d2"></div>
<div class="a" style="left:298.3px;top:132.6px;width:22.5px;height:22.4px;background:#fff;border:.7px solid #d2d2d2"></div>
<div class="a" style="left:244.2px;top:172.5px;width:22.5px;height:22.4px;background:#fff;border:.7px solid #d2d2d2"></div>
<span class="a x" style="left:244.8px;top:114.26px;font-size:5.8px;line-height:7.54px;color:#333;font-weight:bold;transform:scaleX(0.927);">Ninguno</span>
<div class="a" style="left:257px;top:197px;width:147px;height:.7px;background:#e1e1e1"></div>
<span class="a x" style="left:259.5px;top:201.25px;font-size:6.7px;line-height:8.71px;color:#7a7a7a;transform:scaleX(0.985);"><u>C</u>ambiar nivel de lista</span>
<span class="a x" style="left:259.5px;top:214.25px;font-size:6.7px;line-height:8.71px;color:#7a7a7a;transform:scaleX(0.985);"><u>D</u>efinir nueva viñeta...</span>
<svg class="a" style="left:240px;top:51px" width="176" height="182" viewBox="240 51 176 182" fill="none"><g transform="translate(246.6 70) scale(.94)"><path d="M1 1.2 q4 -1.6 8.6 .4 q4.6 -2 8.6 -.4 v12 q-4 -1.4 -8.6 .4 q-4.6 -1.8 -8.6 -.4z" fill="#fff" stroke="#555" stroke-width=".8"/><path d="M9.6 1.6 v12" stroke="#555" stroke-width=".8"/><path d="M0 2.2 v12.4 q4.6 -1.6 9.6 .2 q5 -1.8 9.6 -.2 v-12.4" fill="none" stroke="#888" stroke-width="1.1"/><path d="M1.6 10.4 q3.6 -1 7.4 .2 M10.2 10.6 q3.8 -1.2 7.4 -.2" stroke="#999" stroke-width=".5" fill="none"/><path d="M17.2 2 v11" stroke="#999" stroke-width="1.4"/><path d="M2 2 v11" stroke="#aaa" stroke-width="1"/></g><g transform="translate(273.8 109.2) scale(.94)"><path d="M1 1.2 q4 -1.6 8.6 .4 q4.6 -2 8.6 -.4 v12 q-4 -1.4 -8.6 .4 q-4.6 -1.8 -8.6 -.4z" fill="#fff" stroke="#555" stroke-width=".8"/><path d="M9.6 1.6 v12" stroke="#555" stroke-width=".8"/><path d="M0 2.2 v12.4 q4.6 -1.6 9.6 .2 q5 -1.8 9.6 -.2 v-12.4" fill="none" stroke="#888" stroke-width="1.1"/><path d="M1.6 10.4 q3.6 -1 7.4 .2 M10.2 10.6 q3.8 -1.2 7.4 -.2" stroke="#999" stroke-width=".5" fill="none"/><path d="M17.2 2 v11" stroke="#999" stroke-width="1.4"/><path d="M2 2 v11" stroke="#aaa" stroke-width="1"/></g><g transform="translate(246.6 176) scale(.94)"><path d="M1 1.2 q4 -1.6 8.6 .4 q4.6 -2 8.6 -.4 v12 q-4 -1.4 -8.6 .4 q-4.6 -1.8 -8.6 -.4z" fill="#fff" stroke="#555" stroke-width=".8"/><path d="M9.6 1.6 v12" stroke="#555" stroke-width=".8"/><path d="M0 2.2 v12.4 q4.6 -1.6 9.6 .2 q5 -1.8 9.6 -.2 v-12.4" fill="none" stroke="#888" stroke-width="1.1"/><path d="M1.6 10.4 q3.6 -1 7.4 .2 M10.2 10.6 q3.8 -1.2 7.4 -.2" stroke="#999" stroke-width=".5" fill="none"/><path d="M17.2 2 v11" stroke="#999" stroke-width="1.4"/><path d="M2 2 v11" stroke="#aaa" stroke-width="1"/></g><circle cx="309" cy="118.8" r="3" fill="#111"/>
<ellipse cx="336.4" cy="118.2" rx="4.2" ry="3.6" stroke="#555" stroke-width=".9"/>
<path d="M339.6 115 v8 l1.9 -1.8 l1.4 3 l1.1 -.5 l-1.4 -2.9 h2.6z" fill="#fff" stroke="#333" stroke-width=".6"/>
<rect x="360.8" y="114" width="6" height="5.6" fill="#111"/>
<g><path d="M390.2 112.8 l2.2 2.4 l-2.2 2.4 l-2.2 -2.4z" fill="#f2c21a"/><path d="M387.8 115.6 l2.2 2.2 l-2.2 2.2 l-2 -2.2z" fill="#3a66c4"/><path d="M392.6 115.6 l2.2 2.2 l-2.2 2.2 l-2.2 -2.2z" fill="#e03a3a"/><path d="M390.2 118.2 l2.2 2.2 l-2.2 2.2 l-2.2 -2.2z" fill="#7a3aa8"/></g>
<g fill="#111"><path d="M255.5 137.6 l2.6 2.6 l-2.6 2.6 l-2.6 -2.6z"/><path d="M255.5 144.8 l2.6 2.6 l-2.6 2.6 l-2.6 -2.6z"/><path d="M251.9 141.2 l2.6 2.6 l-2.6 2.6 l-2.6 -2.6z"/><path d="M259.1 141.2 l2.6 2.6 l-2.6 2.6 l-2.6 -2.6z"/></g>
<path d="M276.8 137.8 l11.2 5.7 l-10.6 5.8 l3.8 -5.4z" fill="#111"/><path d="M277.6 138.6 l8.6 4.6 l-5 .4z" fill="#ddd"/>
<path d="M305 144.2 l3 3 l7.6 -10.6" stroke="#111" stroke-width="1.5"/>
<path d="M246 203 l1.8 1.5 l-1.8 1.5" stroke="#3f74b9" stroke-width=".7"/><path d="M249.2 202 h3.6 M250 204.5 h2.8 M249.2 207 h3.6 M249.2 202 v5" stroke="#888" stroke-width=".7"/>
<path d="M406.2 203 l1.8 1.6 l-1.8 1.6z" fill="#777"/>
<path d="M411.6 229.4 l.1 0 M410.2 229.4 l.1 0 M411.6 228 l.1 0" stroke="#aaa" stroke-width=".9" stroke-linecap="square"/>
</svg>
</div>
</body>
</html>
